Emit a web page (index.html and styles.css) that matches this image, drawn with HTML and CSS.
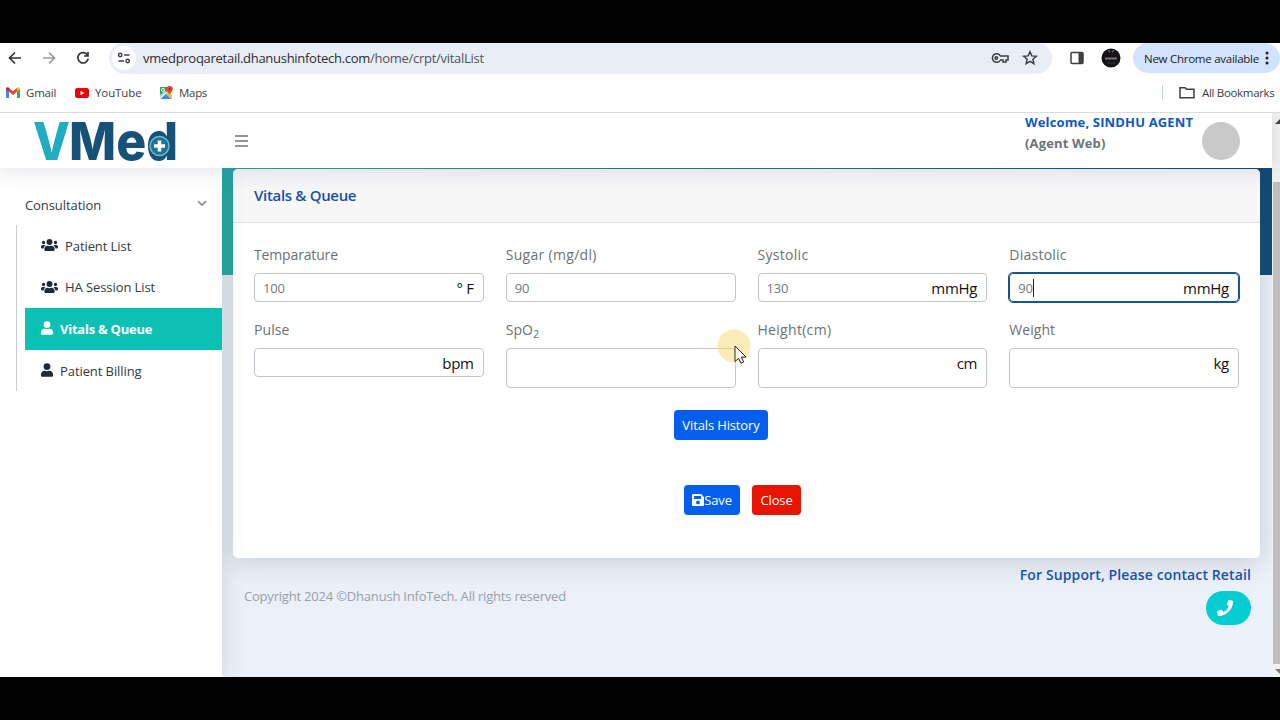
FILE: index.html
```html
<!DOCTYPE html>
<html lang="en">
<head>
<meta charset="utf-8">
<title>VMed - Vitals &amp; Queue</title>
<link rel="stylesheet" href="styles.css">
</head>
<body>
<svg class="defs" width="0" height="0" aria-hidden="true">
  <symbol id="users" viewBox="0 0 640 512"><path d="M96 224a64 64 0 1 0 0-128 64 64 0 0 0 0 128zm448 0a64 64 0 1 0 0-128 64 64 0 0 0 0 128zm32 32h-64c-18 0-34 7-45 19 40 22 69 62 75 109h66c18 0 32-14 32-32v-32c0-35-29-64-64-64zm-256 0a112 112 0 1 0 0-224 112 112 0 0 0 0 224zm77 32h-8a160 160 0 0 1-138 0h-8c-64 0-115 52-115 115v29c0 26 21 48 48 48h288c27 0 48-22 48-48v-29c0-63-51-115-115-115zm-224-13c-11-12-27-19-45-19H64c-35 0-64 29-64 64v32c0 18 14 32 32 32h66c6-47 35-87 75-109z"/></symbol>
  <symbol id="user" viewBox="0 0 448 512"><path d="M224 256a128 128 0 1 0 0-256 128 128 0 0 0 0 256zm90 32h-17a174 174 0 0 1-146 0h-17C60 288 0 348 0 422v42c0 27 22 48 48 48h352c27 0 48-21 48-48v-42c0-74-60-134-134-134z"/></symbol>
</svg>

<div class="browser">
  <div class="toolbar">
    <svg class="nav back" width="16" height="16" viewBox="0 0 16 16"><path d="M14 8H3M8 2.500 2.500 8 8 13.500"/></svg>
    <svg class="nav forward" width="16" height="16" viewBox="0 0 16 16"><path d="M2 8h11M8 2.500 13.500 8 8 13.500"/></svg>
    <svg class="nav reload" width="16" height="16" viewBox="0 0 16 16"><path d="M12.600 5.200A5.200 5.200 0 1 0 13.200 8.600M13 2v4H9"/></svg>
    <div class="omnibox">
      <span class="tune"><svg width="14" height="14" viewBox="0 0 14 14"><circle cx="3.200" cy="4" r="1.700"/><path d="M7 4h5.500M1.500 10H7"/><circle cx="10.700" cy="10" r="1.700"/></svg></span>
      <span class="url">vmedproqaretail.dhanushinfotech.com<span class="path">/home/crpt/vitalList</span></span>
      <svg class="key" width="18" height="12" viewBox="0 0 18 12"><path d="M9.500 4A4.300 4.300 0 1 0 9.500 8H12v2h3V8h2V4z"/><circle cx="5.300" cy="6" r="1.300"/></svg>
      <svg class="star" width="16" height="16" viewBox="0 0 16 16"><path d="m8 1.800 1.800 4.100 4.500.4-3.400 3 1 4.400L8 11.400l-3.900 2.300 1-4.400-3.400-3 4.500-.4z"/></svg>
    </div>
    <svg class="panel" width="14" height="14" viewBox="0 0 14 14"><rect x="1" y="1.500" width="12" height="11" rx="1" fill="none" stroke="#3c4043" stroke-width="1.500"/><path fill="#3c4043" d="M8.500 1.500H13v11H8.500z"/></svg>
    <svg class="profile" width="20" height="20" viewBox="0 0 20 20"><circle cx="10" cy="10" r="9.500" fill="#111318"/><path d="m7.500 2 1.200 2.500M12.500 2l-1.200 2.500" stroke="#788392"/><path d="M4 9.500h12v2H4z" fill="#7d6c70"/><path d="M6 15h8" stroke="#333a42"/></svg>
    <div class="update"><span>New Chrome available</span><svg width="4" height="16" viewBox="0 0 4 16" fill="#202124"><circle cx="2" cy="3" r="1.500"/><circle cx="2" cy="8" r="1.500"/><circle cx="2" cy="13" r="1.500"/></svg></div>
  </div>
  <div class="bookmarks">
    <svg width="14" height="11" viewBox="0 0 14 11"><path fill="#4285f4" d="M0 2h3v9H1a1 1 0 0 1-1-1z"/><path fill="#34a853" d="M11 2h3v8a1 1 0 0 1-1 1h-2z"/><path fill="#ea4335" d="m3 1 4 3.200L11 1v3.800L7 8 3 4.800z"/><path fill="#c5221f" d="M0 2C0 .3 1.700-.3 3 .8v4L0 2.600z"/><path fill="#fbbc04" d="M14 2c0-1.700-1.700-2.300-3-1.200v4l3-2.200z"/></svg>
    <span class="gmail">Gmail</span>
    <svg width="14" height="10" viewBox="0 0 14 10"><rect width="14" height="10" rx="2.300" fill="#f00000"/><path fill="#fff" d="m5.500 2.800 4 2.200-4 2.200z"/></svg>
    <span class="youtube">YouTube</span>
    <svg width="14" height="14" viewBox="0 0 14 14"><path fill="#34a853" d="M1 1h7v6l-7 6z"/><path fill="#aecbfa" d="M1 13V9l5-4 7 8z"/><path fill="#4285f4" d="m2 13 5-5 5 5z"/><path fill="#fbbc04" d="m7 7 2-2 4 4v4z"/><path stroke="#fff" d="m1 12 8-7"/><circle cx="4" cy="4" r="1.500" fill="none" stroke="#fff"/><path fill="#ea4335" d="M10.500 8.500 8 5a3.200 3.200 0 1 1 5.300-.3z"/><circle cx="10.700" cy="3" r="1" fill="#8c1d18"/></svg>
    <span class="maps">Maps</span>
    <span class="divider"></span>
    <svg class="folder" width="16" height="13" viewBox="0 0 16 13"><path d="M1 1.700h5l1.500 1.600H15v8.500H1z"/></svg>
    <span class="all">All Bookmarks</span>
  </div>
</div>

<div class="viewport">
  <div class="app">
    <header class="header">
      <svg class="logo" width="146" height="55" viewBox="0 0 146 55">
        <text class="logo-v" x="1" y="47" textLength="37" lengthAdjust="spacingAndGlyphs">V</text>
        <text class="logo-med" x="37" y="47" textLength="109" lengthAdjust="spacingAndGlyphs">Med</text>
        <circle cx="127.500" cy="33" r="9.500" fill="#1d7699" stroke="#73b8cf" stroke-width="1.500"/><path d="M127.500 27.500v11M122 33h11" stroke="#fff" stroke-width="3.500"/>
      </svg>
      <svg class="menu" width="13" height="12" viewBox="0 0 13 12"><path d="M0 1h13M0 6h13M0 11h13"/></svg>
      <div class="welcome"><div class="name">Welcome, SINDHU AGENT</div><div class="role">(Agent Web)</div></div>
      <span class="avatar"></span>
    </header>
    <div class="body">
      <nav class="sidebar">
        <div class="group"><span>Consultation</span><svg width="10" height="7" viewBox="0 0 10 7"><path d="m1 1.300 4 3.700 4-3.700"/></svg></div>
        <div class="items">
          <div class="item"><svg width="17" height="14"><use href="#users"/></svg><span>Patient List</span></div>
          <div class="item"><svg width="17" height="14"><use href="#users"/></svg><span>HA Session List</span></div>
          <div class="item active"><svg width="12" height="14"><use href="#user"/></svg><span>Vitals &amp; Queue</span></div>
          <div class="item"><svg width="12" height="14"><use href="#user"/></svg><span>Patient Billing</span></div>
        </div>
      </nav>
      <main class="main">
        <section class="card">
          <h1 class="card-head"><span>Vitals &amp; Queue</span></h1>
          <div class="fields">
            <div class="field"><label>Temparature</label><div class="input"><span class="value">100</span><span class="unit">° F</span></div></div>
            <div class="field"><label>Sugar (mg/dl)</label><div class="input"><span class="value">90</span></div></div>
            <div class="field"><label>Systolic</label><div class="input"><span class="value">130</span><span class="unit">mmHg</span></div></div>
            <div class="field"><label>Diastolic</label><div class="input focus"><span class="value caret">90</span><span class="unit">mmHg</span></div></div>
            <div class="field"><label>Pulse</label><div class="input"><span class="unit">bpm</span></div></div>
            <div class="field"><label>SpO<sub>2</sub></label><div class="input tall"></div></div>
            <div class="field"><label>Height(cm)</label><div class="input tall"><span class="unit">cm</span></div></div>
            <div class="field"><label>Weight</label><div class="input tall"><span class="unit">kg</span></div></div>
          </div>
          <div class="history"><button class="btn h">Vitals History</button></div>
          <div class="actions"><button class="btn s"><svg width="12" height="12" viewBox="0 0 12 12"><path fill="#fff" fill-rule="evenodd" d="M1.300 0H9l3 3v7.700c0 .7-.6 1.300-1.300 1.300H1.300C.6 12 0 11.400 0 10.700V1.300C0 .6.600 0 1.300 0zM2 2v3h7V2zm4 4.500a1.900 1.900 0 1 0 0 3.800 1.900 1.900 0 0 0 0-3.800z"/></svg><span>Save</span></button><button class="btn c">Close</button></div>
        </section>
        <footer class="footer">
          <div class="copy"><span>Copyright 2024 ©Dhanush InfoTech. All rights reserved</span></div>
          <div class="support"><div class="support-text">For Support, Please contact Retail</div>
          <span class="phone"><svg width="16" height="16" viewBox="0 0 512 512"><path fill="#fff" d="m493 25-104-24c-11-3-23 3-27 14l-48 112c-4 10-1 21 7 28l61 49a371 371 0 0 1-178 178l-49-61c-7-8-18-11-28-7L15 362c-11 4-17 16-14 27l24 104c2 11 12 19 23 19 256 0 464-207 464-464 0-11-8-21-19-23z"/></svg></span></div>
        </footer>
      </main>
    </div>
  </div>
  <div class="scrollbar"><span class="up"></span><span class="thumb"></span><span class="down"></span></div>
</div>
<svg class="pointer" width="36" height="36" viewBox="0 0 36 36"><circle cx="17" cy="17" r="16.500" fill="#f8dc7c" fill-opacity=".55"/><path d="M18 17v15.500l3.600-3.300 2.300 5 2.700-1.200-2.300-4.900h4.800z" fill="#fff" stroke="#222"/></svg>
</body>
</html>
```
FILE: styles.css
```css
* { box-sizing: border-box; }
body {
  margin: 0; height: 720px; padding: 43px 0; background: #000; overflow: hidden;
  font-family: "Open Sans", "Noto Sans", sans-serif; color: #202124;
}
svg { display: block; flex: none; }
.defs { position: absolute; }
span, label { white-space: nowrap; }

.browser { height: 70px; background: #fff; border-bottom: 1px solid #dadce0; overflow: hidden; }
.toolbar { display: flex; align-items: center; height: 30px; padding-left: 7px; }
.nav { fill: none; stroke: #333; stroke-width: 1.700; }
.forward { stroke: #9a9a9a; margin-left: 18px; }
.reload { margin-left: 18px; }
.omnibox { display: flex; align-items: center; width: 943px; height: 32px; margin-left: 18px; padding-left: 3px; border-radius: 16px; background: #e9edf6; }
.toolbar .omnibox { flex: 0 0 943px; }
.tune { display: flex; align-items: center; justify-content: center; width: 24px; height: 24px; border-radius: 50%; background: #fff; }
.tune svg, .key, .star, .folder { fill: none; stroke: #3c4043; stroke-width: 1.500; }
.url { flex: 1; margin-left: 7px; font-size: 13px; letter-spacing: -.28px; color: #2b2e33; }
.path { color: #4f5358; }
.star { margin: 0 14px 0 13px; }
.panel { margin-left: 18px; }
.profile { margin-left: 17px; }
.update { display: flex; align-items: center; justify-content: space-between; height: 30px; flex: 1; margin-left: 12px; padding: 0 11px; border-radius: 15px; background: #d3e3fd; font-size: 11.500px; letter-spacing: -.26px; }
.bookmarks { display: flex; align-items: center; height: 39px; padding: 0 6px; font-size: 11.500px; color: #3c4043; }
.gmail { width: 49px; margin-left: 6px; letter-spacing: -.2px; }
.youtube { width: 64px; margin-left: 6px; letter-spacing: -.1px; }
.maps { margin-left: 6px; letter-spacing: -.3px; }
.divider { width: 1px; height: 15px; margin-left: auto; background: #c6d3e6; }
.folder { margin-left: 16px; }
.all { width: 72px; margin-left: 7px; letter-spacing: -.32px; }

.viewport { display: flex; height: 564px; overflow: hidden; }
.app { width: 1272px; display: flex; flex-direction: column; background: #ebf0f9; }
.header { display: flex; align-items: center; height: 55px; background: #fff; position: relative; z-index: 2; box-shadow: 0 4px 22px rgba(40,50,70,.12); }
.logo { margin-left: 32px; }
.logo text { font-family: Inter, sans-serif; font-weight: 800; font-size: 52px; }
.logo-v { fill: #20adc2; }
.logo-med { fill: #165178; }
.menu { margin-left: 57px; stroke: #707579; stroke-width: 1.500; }
.welcome { width: 169px; margin: -16px 0 0 777px; font-size: 13px; line-height: 21px; font-weight: 700; letter-spacing: .15px; white-space: nowrap; }
.name { color: #0b5ac4; }
.role { color: #6c727a; }
.avatar { width: 38px; height: 38px; margin-left: 8px; border-radius: 50%; background: #c9c9c9; }

.body { flex: 1; display: flex; min-height: 0; }
.sidebar { width: 222px; padding-top: 16px; background: #fff; position: relative; z-index: 1; box-shadow: 2px 0 20px rgba(60,80,80,.16); font-size: 13px; color: #343a43; }
.group { display: flex; justify-content: space-between; align-items: center; height: 41px; padding: 0 15px 0 25px; letter-spacing: -.08px; }
.group svg { fill: none; stroke: #959a9f; stroke-width: 2; margin-top: -2px; }
.items { width: 206px; margin-left: 16px; border-left: 1px solid #c9ccd0; padding-left: 8px; }
.item { display: flex; align-items: center; height: 41.600px; padding-left: 16px; gap: 7px; letter-spacing: -.08px; }
.item svg { fill: #1f2937; margin-top: -1.500px; }
.item.active { background: #0bc1b6; color: #fff; font-weight: 700; letter-spacing: -.25px; }
.item.active svg { fill: #fff; }

.main { flex: 1; padding: 1px 12px 0 11px; background: linear-gradient(90deg, #23ada9, #104a75) 0 0 / 100% 107px no-repeat; }
.card { height: 389px; background: #fff; border-radius: 5px; box-shadow: 0 4px 26px rgba(60,80,75,.22); }
.card-head { display: flex; align-items: center; height: 54px; margin: 0; padding: 0 0 2px 21px; border-bottom: 1px solid #dedfe1; border-radius: 5px 5px 0 0; background: #f7f7f8; color: #1650ab; font-size: 15px; font-weight: 600; letter-spacing: -.32px; }
.fields { display: grid; grid-template-columns: repeat(4, 1fr); column-gap: 22px; grid-auto-rows: 75px; padding: 21px 21px 0; }
.field label { display: block; height: 29px; line-height: 21px; font-size: 14px; letter-spacing: .06px; color: #6c7177; }
.field:nth-child(2) label, .field:nth-child(4n+3) label { letter-spacing: .3px; }
.field:nth-child(4) label { letter-spacing: .25px; }
.field:nth-child(1) label { letter-spacing: -.15px; }
sub { font-size: 11px; line-height: 0; vertical-align: -3px; }
.input { display: flex; align-items: flex-start; height: 29px; padding: 0 9px 0 8px; border: 1px solid #c0c6cd; border-radius: 4px; }
.input.tall { height: 40px; }
.input.focus { outline: 1px solid #175690; border-color: #175690; }
.value { font-size: 13px; line-height: 28px; letter-spacing: -.2px; color: #74787d; }
.caret { height: 18px; margin-top: 5px; line-height: 18px; border-right: 1px solid #222; }
.unit { margin-left: auto; font-size: 15px; line-height: 29px; letter-spacing: -.25px; color: #111; }
.history { display: flex; justify-content: center; padding: 16px 51px 0 0; }
.actions { display: flex; gap: 12px; padding: 45px 0 0 451px; }
.btn { display: flex; align-items: center; justify-content: center; height: 30px; padding: 0; border: 0; border-radius: 4px; background: #055fee; color: #fff; font: 13px "Open Sans", sans-serif; letter-spacing: -.13px; white-space: nowrap; }
.h { width: 94px; }
.s { width: 56px; }
.c { width: 49px; background: #e61400; }
.footer { display: flex; justify-content: space-between; padding: 6px 9px 0 11px; }
.copy { padding-top: 22px; font-size: 13px; line-height: 20px; letter-spacing: -.2px; color: #99a1aa; }
.support { display: flex; flex-direction: column; align-items: flex-end; }
.support-text { height: 27px; line-height: 21px; font-size: 14px; font-weight: 600; letter-spacing: .12px; color: #1752ad; white-space: nowrap; }
.phone { display: flex; align-items: center; width: 45px; height: 34px; padding-left: 11px; border-radius: 17px; background: #04cdd2; }

.scrollbar { display: flex; flex-direction: column; width: 8px; padding-left: 1px; background: #f1f1f1; }
.up { height: 69px; }
.up::before { content: ""; display: block; margin: 6px 0 0 2px; border: 5px solid transparent; border-top: 0; border-bottom-color: #444; width: 10px; }
.thumb { height: 482px; background: #bebebe; }
.down::before { content: ""; display: block; margin: 5px 0 0 2px; border: 5px solid transparent; border-bottom: 0; border-top-color: #777; width: 10px; }
.pointer { position: absolute; left: 717px; top: 329px; }
```
